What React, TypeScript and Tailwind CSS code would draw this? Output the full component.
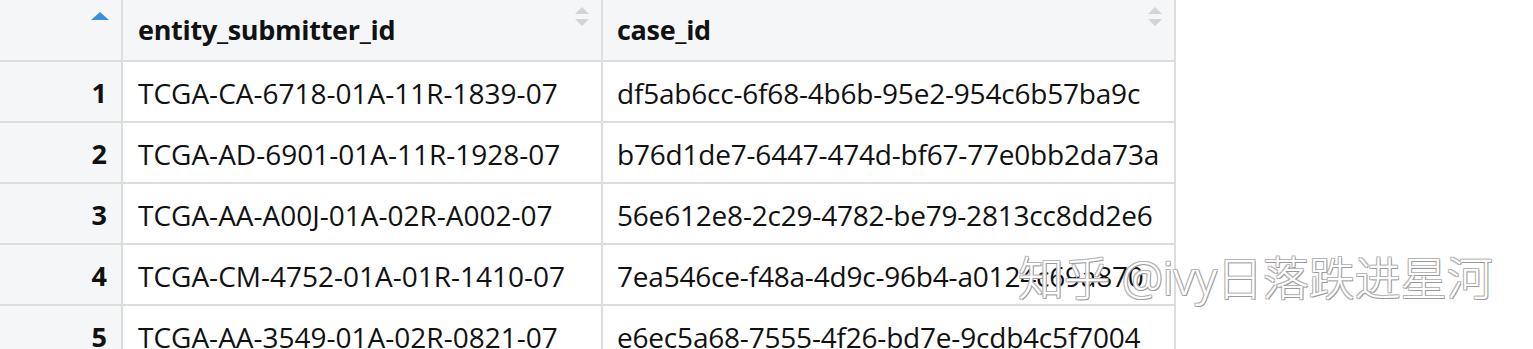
import React from 'react';

const ROWS: { n: number; entity: string; caseId: string }[] = [
  { n: 1, entity: 'TCGA-CA-6718-01A-11R-1839-07', caseId: 'df5ab6cc-6f68-4b6b-95e2-954c6b57ba9c' },
  { n: 2, entity: 'TCGA-AD-6901-01A-11R-1928-07', caseId: 'b76d1de7-6447-474d-bf67-77e0bb2da73a' },
  { n: 3, entity: 'TCGA-AA-A00J-01A-02R-A002-07', caseId: '56e612e8-2c29-4782-be79-2813cc8dd2e6' },
  { n: 4, entity: 'TCGA-CM-4752-01A-01R-1410-07', caseId: '7ea546ce-f48a-4d9c-96b4-a0124c69a870' },
  { n: 5, entity: 'TCGA-AA-3549-01A-02R-0821-07', caseId: 'e6ec5a68-7555-4f26-bd7e-9cdb4c5f7004' },
];

const GRID = 'grid grid-cols-[123px_480px_573px]';
const CELL = 'border-r-2 border-b-2 border-[#dddddd]';

function SortIcons() {
  return (
    <svg className="absolute top-[7px] right-[12px]" width="14" height="20" viewBox="0 0 14 20">
      <polygon points="7,0 14,7 0,7" fill="#d4d4d4" />
      <polygon points="0,12 14,12 7,19" fill="#d4d4d4" />
    </svg>
  );
}

export default function App() {
  return (
    <div
      className="relative w-[1533px] h-[349px] overflow-hidden bg-white text-[#111111]"
      style={{ fontFamily: '"Open Sans", "Noto Sans", sans-serif' }}
    >
      <div className="w-[1176px]">
        {/* Header */}
        <div className={`${GRID} h-[62px] bg-[#f5f6f8]`}>
          <div className={`${CELL} relative`}>
            <svg className="absolute top-[12px] right-[12px]" width="18" height="8" viewBox="0 0 18 8">
              <polygon points="9,0 18,8 0,8" fill="#3b8fe0" />
            </svg>
          </div>
          <div className={`${CELL} relative flex items-center pl-[15px] pt-[1px] text-[27px] font-bold tracking-[-0.3px]`}>
            entity_submitter_id
            <SortIcons />
          </div>
          <div className={`${CELL} relative flex items-center pl-[14px] pt-[1px] text-[27px] font-bold tracking-[-0.3px]`}>
            case_id
            <SortIcons />
          </div>
        </div>

        {/* Body */}
        {ROWS.map((r) => (
          <div key={r.n} className={`${GRID} h-[61px]`}>
            <div className={`${CELL} bg-[#f5f6f8] flex items-center justify-end pr-[14px] pt-[3px] text-[27px] font-bold`}>
              {r.n}
            </div>
            <div className={`${CELL} flex items-center pl-[15px] pt-[3px] text-[28px]`}>
              {r.entity}
            </div>
            <div className={`${CELL} flex items-center pl-[14px] pt-[3px] text-[28px] tracking-[-0.2px]`}>
              {r.caseId}
            </div>
          </div>
        ))}
      </div>

      {/* Watermark */}
      <div
        className="absolute left-[1018px] top-[254px] text-[46px] font-light leading-none text-white whitespace-nowrap"
        style={{
          fontFamily: '"Noto Sans", "Noto Sans CJK SC", sans-serif',
          textShadow: '1px 1px 0 #9a9a9a, -1px -1px 0 #b5b5b5, 1px -1px 0 #b5b5b5, -1px 1px 0 #b5b5b5',
        }}
      >
        知乎 @ivy日落跌进星河
      </div>
    </div>
  );
}
